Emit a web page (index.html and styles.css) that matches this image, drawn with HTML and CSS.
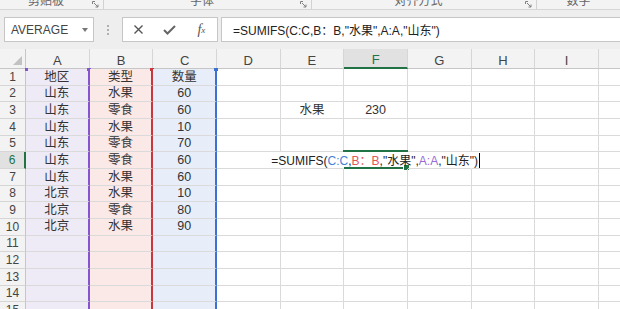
FILE: index.html
```html
<!DOCTYPE html>
<html lang="zh-CN">
<head>
  <meta charset="UTF-8">
  <title>SUMIFS</title>
  <link rel="stylesheet" href="styles.css">
</head>
<body>

  <div class="ribbon">
    <div class="grupo g1"><span class="nombre">剪贴板</span><svg class="launch" viewBox="0 0 7 7"><path d="M0.5 3V0.5H3M2 2L6 6M6 3.5V6H3.5" /></svg></div>
    <div class="grupo g2"><span class="nombre">字体</span><svg class="launch" viewBox="0 0 7 7"><path d="M0.5 3V0.5H3M2 2L6 6M6 3.5V6H3.5" /></svg></div>
    <div class="grupo g3"><span class="nombre">对齐方式</span><svg class="launch" viewBox="0 0 7 7"><path d="M0.5 3V0.5H3M2 2L6 6M6 3.5V6H3.5" /></svg></div>
    <div class="grupo g4"><span class="nombre">数字</span></div>
  </div>

  <div class="fbar">
    <div class="namebox"><span>AVERAGE</span><i class="drop"></i></div>
    <div class="grip"><i></i><i></i><i></i></div>
    <div class="fbtns">
      <span class="btn"><svg width="9" height="9" viewBox="0 0 9 9"><path d="M0.5 0.5L8.5 8.5M8.5 0.5L0.5 8.5" /></svg></span>
      <span class="btn"><svg width="13" height="10" viewBox="0 0 13 10"><path d="M1 5L4.5 8.5L12 1" /></svg></span>
      <span class="btn fx">f<sub>x</sub></span>
    </div>
    <div class="finput">=SUMIFS(C:C,B：B,"水果",A:A,"山东")</div>
  </div>

  <div class="sheet" id="hoja"></div>

  <script>
    const cols = ['A', 'B', 'C', 'D', 'E', 'F', 'G', 'H', 'I', 'J'];
    const datos = [
      ['地区', '类型', '数量'],
      ['山东', '水果', '60'],
      ['山东', '零食', '60'],
      ['山东', '水果', '10'],
      ['山东', '零食', '70'],
      ['山东', '零食', '60'],
      ['山东', '水果', '60'],
      ['北京', '水果', '10'],
      ['北京', '零食', '80'],
      ['北京', '水果', '90']
    ];
    const extra = { E3: '水果', F3: '230' };
    const rangos = { A: 'ra', B: 'rb', C: 'rc' };
    const colActiva = 'F';
    const filaActiva = 6;
    const hoja = document.getElementById('hoja');

    function add(cls, texto) {
      const d = document.createElement('div');
      d.className = cls;
      if (texto) d.textContent = texto;
      hoja.appendChild(d);
      return d;
    }

    add('corner').innerHTML = '<i class="tri"></i>';
    cols.forEach(c => add('colhead' + (c === colActiva ? ' on' : ''), c));

    for (let r = 1; r <= 15; r++) {
      add('rowhead' + (r === filaActiva ? ' on' : ''), String(r));
      cols.forEach((c, i) => {
        let cls = 'cell';
        if (rangos[c]) cls += ' ' + rangos[c] + (r === 1 ? ' top' : '');
        if (r === filaActiva && 'DEFG'.includes(c)) cls += ' under';
        const fila = datos[r - 1] || [];
        const celda = add(cls, fila[i] || extra[c + r] || '');
        if (c === colActiva && r === filaActiva) {
          celda.classList.add('edit');
          celda.innerHTML =
            '<span class="typing">=SUMIFS(<span class="ref-c">C:C</span>,' +
            '<span class="ref-b">B：B</span>,"水果",' +
            '<span class="ref-a">A:A</span>,"山东")<i class="cursor"></i></span>';
        }
      });
    }
  </script>

</body>
</html>
```

FILE: styles.css
```css
:root {
  --verde: #217346;
  --morado: #8455cf;
  --rojo: #c8373d;
  --azul: #3b72d1;
  --rejilla: #dadada;
}

html, body {
  margin: 0;
  width: 620px;
  height: 309px;
  overflow: hidden;
  background: #fff;
}

body {
  font-family: "Liberation Sans", "Noto Sans CJK SC", sans-serif;
  color: #333;
}

/* ribbon labels, cut at the top */
.ribbon {
  display: flex;
  height: 9px;
  background: #f3f3f3;
  border-bottom: 1px solid #d6d6d6;
  overflow: hidden;
}

.grupo {
  display: flex;
  align-items: flex-start;
  border-right: 1px solid #d2d2d2;
  box-sizing: border-box;
}

.g1 { width: 104px; }
.g2 { width: 208px; }
.g3 { width: 225px; }
.g4 { flex: 1; border-right: none; }

.nombre {
  flex: 1;
  text-align: center;
  font-family: "Noto Sans CJK SC", sans-serif;
  font-size: 12px;
  line-height: 12px;
  margin-top: -6px;
  color: #666;
}

.launch {
  width: 7px;
  height: 7px;
  margin: 1px 4px 0 0;
  fill: none;
  stroke: #808080;
  stroke-width: 1;
}

/* formula bar */
.fbar {
  display: flex;
  align-items: flex-start;
  height: 39px;
  box-sizing: border-box;
  padding: 7px 0 0 4px;
  background: #eeeeee;
}

.namebox {
  width: 90px;
  height: 25px;
  box-sizing: border-box;
  background: #fff;
  border: 1px solid #c6c6c6;
  display: flex;
  align-items: center;
  padding: 0 5px 0 6px;
  font-size: 12px;
  color: #444;
}

.namebox span { flex: 1; }

.drop {
  border-left: 3.5px solid transparent;
  border-right: 3.5px solid transparent;
  border-top: 4px solid #777;
}

.grip {
  width: 28px;
  height: 25px;
  display: flex;
  flex-direction: column;
  align-items: center;
  justify-content: center;
  gap: 2px;
}

.grip i {
  width: 2px;
  height: 2px;
  background: #b0b0b0;
}

.fbtns {
  width: 96px;
  height: 25px;
  box-sizing: border-box;
  background: #fff;
  border: 1px solid #c6c6c6;
  display: flex;
}

.btn {
  flex: 1;
  display: flex;
  align-items: center;
  justify-content: center;
}

.btn svg {
  fill: none;
  stroke: #555;
  stroke-width: 1.4;
}

.btn:nth-child(2) svg { stroke-width: 2; stroke: #666; }

.fx {
  font-family: "Liberation Serif", serif;
  font-style: italic;
  font-size: 14px;
  color: #555;
}

.fx sub {
  font-size: 9px;
  vertical-align: -1px;
}

.finput {
  flex: 1;
  height: 25px;
  box-sizing: border-box;
  margin-left: 3px;
  margin-right: -2px;
  background: #fff;
  border: 1px solid #c6c6c6;
  padding-left: 11px;
  display: flex;
  align-items: center;
  font-size: 12px;
  color: #222;
  white-space: nowrap;
}

/* grid */
.sheet {
  display: grid;
  grid-template-columns: 26px repeat(10, 63.67px);
  grid-template-rows: 20px repeat(15, 16.67px);
  width: max-content;
  background: #fff;
}

.corner {
  background: #f3f3f3;
  border-right: 1px solid #c6c6c6;
  border-bottom: 1px solid #c6c6c6;
  display: flex;
  justify-content: flex-end;
  align-items: flex-end;
  padding: 0 3px 3px 0;
}

.tri {
  border-left: 9px solid transparent;
  border-bottom: 9px solid #c2c2c2;
}

.colhead {
  background: #f3f3f3;
  border-right: 1px solid #d6d6d6;
  border-bottom: 1px solid #c6c6c6;
  display: flex;
  justify-content: center;
  align-items: center;
  padding-top: 3px;
  font-size: 13px;
  color: #444;
}

.colhead.on {
  background: #e1e1e1;
  color: var(--verde);
  border-bottom: 2px solid var(--verde);
}

.rowhead {
  background: #f3f3f3;
  border-right: 1px solid #c6c6c6;
  border-bottom: 1px solid #d6d6d6;
  display: flex;
  justify-content: center;
  align-items: center;
  font-size: 12px;
  color: #444;
}

.rowhead.on {
  background: #e1e1e1;
  color: var(--verde);
  border-right: 2px solid var(--verde);
}

.cell {
  position: relative;
  border-right: 1px solid var(--rejilla);
  border-bottom: 1px solid var(--rejilla);
  display: flex;
  justify-content: center;
  align-items: center;
  font-size: 12.5px;
  line-height: 1;
  color: #333;
}

.ra { background: #eeebf6; border-right: 2px solid var(--morado); }
.rb { background: #fbe9e7; border-right: 2px solid var(--rojo); }
.rc { background: #e8eef9; border-right: 2px solid var(--azul); }

.top::after {
  content: "";
  position: absolute;
  top: -1px;
  right: -3px;
  width: 4px;
  height: 3px;
}

.ra.top::before {
  content: "";
  position: absolute;
  top: -1px;
  left: -1px;
  width: 3px;
  height: 3px;
  background: var(--morado);
}

.ra.top::after { background: var(--morado); }
.rb.top::after { background: var(--rojo); }
.rc.top::after { background: var(--azul); }

.under { border-right-color: transparent; }

.edit { border-bottom: 2px solid var(--verde); }

.edit::before {
  content: "";
  position: absolute;
  left: -1px;
  right: -1px;
  top: -2px;
  height: 2px;
  background: var(--verde);
}

.edit::after {
  content: "";
  position: absolute;
  right: -3px;
  bottom: -4px;
  width: 5px;
  height: 5px;
  background: var(--verde);
  border: 1px solid #fff;
}

.typing {
  flex-shrink: 0;
  position: relative;
  z-index: 1;
  display: flex;
  align-items: center;
  white-space: nowrap;
  font-size: 12px;
  color: #222;
  margin-top: 2px;
}

.ref-c { color: #4a7fd6; }
.ref-b { color: #e0565b; }
.ref-a { color: #9a6ad6; }

.cursor {
  width: 1px;
  height: 15px;
  background: #000;
  margin-left: 1px;
}
```
